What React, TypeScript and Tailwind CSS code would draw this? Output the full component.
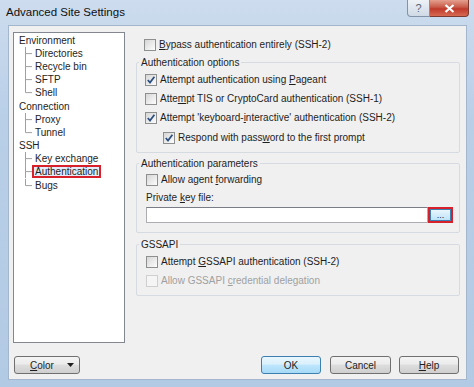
import React from 'react';

type TreeItem = { label: string; child?: boolean; last?: boolean; selected?: boolean };

const tree: TreeItem[] = [
  { label: 'Environment' },
  { label: 'Directories', child: true },
  { label: 'Recycle bin', child: true },
  { label: 'SFTP', child: true },
  { label: 'Shell', child: true, last: true },
  { label: 'Connection' },
  { label: 'Proxy', child: true },
  { label: 'Tunnel', child: true, last: true },
  { label: 'SSH' },
  { label: 'Key exchange', child: true },
  { label: 'Authentication', child: true, selected: true },
  { label: 'Bugs', child: true, last: true },
];

const Check: React.FC<{ checked?: boolean; disabled?: boolean }> = ({ checked, disabled }) => (
  <span
    className={
      disabled
        ? 'w-[12px] h-[12px] shrink-0 border border-[#cfcfcf] bg-[#f5f5f5]'
        : 'w-[12px] h-[12px] shrink-0 border border-[#8e8f8f] bg-[linear-gradient(135deg,#d6d6d6,#fdfdfd)] flex items-center justify-center'
    }
  >
    {checked && (
      <svg width="10" height="10" viewBox="0 0 10 10">
        <path d="M1.8 5 L4 7.6 L8.4 1.8" stroke="#2a4d80" strokeWidth="1.7" fill="none" />
      </svg>
    )}
  </span>
);

const CheckRow: React.FC<{ checked?: boolean; disabled?: boolean; className?: string; children: React.ReactNode }> = ({
  checked,
  disabled,
  className,
  children,
}) => (
  <div className={`flex items-center h-[13px] gap-[3px] ${className ?? ''}`}>
    <Check checked={checked} disabled={disabled} />
    <span className={disabled ? 'text-[#a0a0a0] whitespace-nowrap' : 'whitespace-nowrap'}>{children}</span>
  </div>
);

const Group: React.FC<{ title: string; className?: string; children: React.ReactNode }> = ({ title, className, children }) => (
  <fieldset className={`border border-[#d5dbe0] rounded-[2px] pl-[2px] pr-[6px] ${className ?? ''}`}>
    <legend className="px-[2px] h-[13px] leading-[13px]">{title}</legend>
    {children}
  </fieldset>
);

const grayBtn =
  'h-[18px] rounded-[3px] border border-[#707070] bg-[linear-gradient(180deg,#f4f4f4_0%,#ebebeb_45%,#dddddd_50%,#cfcfcf_100%)] flex items-center';

const App: React.FC = () => {
  return (
    <div className="w-[474px] h-[387px] flex flex-col font-['Liberation_Sans',Arial,sans-serif] text-[10px] text-[#1e1e1e] bg-[linear-gradient(180deg,#cddcee_0%,#b9cfe8_30%,#b3cae4_100%)]">
      {/* title bar */}
      <div className="h-[25px] flex items-start shrink-0">
        <div className="pl-[6px] pt-[5px] text-[11.5px] leading-[14px] text-[#101010]">Advanced Site Settings</div>
        <div className="ml-auto mr-[5px] flex">
          <div className="w-[23px] h-[17px] rounded-bl-[4px] border border-[#8392a6] border-t-0 bg-[linear-gradient(180deg,#eef2f7,#cfd9e5)] flex items-center justify-center text-[11px] text-[#5a6576]">
            ?
          </div>
          <div className="w-[39px] h-[17px] rounded-br-[4px] border border-[#7a3a30] border-t-0 border-l-0 bg-[linear-gradient(180deg,#e5a08f_0%,#c85a48_45%,#c0392a_55%,#d66a52_100%)] flex items-center justify-center">
            <svg width="11" height="9" viewBox="0 0 11 9">
              <path d="M1.5 1 L9.5 8 M9.5 1 L1.5 8" stroke="#ffffff" strokeWidth="2.2" />
            </svg>
          </div>
        </div>
      </div>

      {/* client area */}
      <div className="ml-[8px] mr-[7px] mb-[7px] flex-1 bg-[#f0f0f0] border border-[#a3b6cc] flex flex-col px-[4px] pt-[6px] pb-[5px]">
        <div className="flex h-[311px]">
          {/* tree */}
          <div className="w-[112px] h-full bg-white border border-[#828790] pt-[0.5px]">
            {tree.map((it) => (
              <div key={it.label} className="h-[13.2px] leading-[13px] flex items-center">
                {it.child ? (
                  <>
                    <svg width="7" height="13.2" viewBox="0 0 7 13.2" className="ml-[11px] shrink-0">
                      <path d={it.last ? 'M0.5 0 V6.6 H7' : 'M0.5 0 V13.2 M0.5 6.6 H7'} stroke="#a0a0a0" strokeWidth="1" fill="none" />
                    </svg>
                    <span
                      className={
                        it.selected
                          ? 'border-2 border-[#d8202a] bg-[#e3ecf8] h-[13px] leading-[9px] px-[1px] whitespace-nowrap'
                          : 'border-2 border-transparent px-[1px] whitespace-nowrap'
                      }
                    >
                      {it.label}
                    </span>
                  </>
                ) : (
                  <span className="pl-[5px]">{it.label}</span>
                )}
              </div>
            ))}
          </div>

          {/* settings */}
          <div className="flex-1 ml-[11px] mr-[2px] flex flex-col">
            <CheckRow className="mt-[6px] ml-[8px]">
              <u>B</u>ypass authentication entirely (SSH-2)
            </CheckRow>

            <Group title="Authentication options" className="mt-[5px] pb-[8px]">
              <div className="flex flex-col gap-[6px] pt-[4px] pl-[6px]">
                <CheckRow checked>
                  Attempt authentication using <u>P</u>ageant
                </CheckRow>
                <CheckRow>
                  Atte<u>m</u>pt TIS or CryptoCard authentication (SSH-1)
                </CheckRow>
                <CheckRow checked>
                  Attempt 'keyboard-<u>i</u>nteractive' authentication (SSH-2)
                </CheckRow>
                <CheckRow checked className="ml-[18px] mt-[1px]">
                  Respond with pass<u>w</u>ord to the first prompt
                </CheckRow>
              </div>
            </Group>

            <Group title="Authentication parameters" className="mt-[4px] pb-[9px]">
              <div className="flex flex-col pt-[3px] pl-[7px]">
                <CheckRow>
                  Allow agent <u>f</u>orwarding
                </CheckRow>
                <div className="mt-[5px] h-[13px] leading-[13px]">
                  Private <u>k</u>ey file:
                </div>
                <div className="mt-[3px] flex h-[16px]">
                  <div className="flex-1 bg-white border border-[#abadb3] border-t-[#7a7d85]" />
                  <div className="w-[25px] h-[16px] border-2 border-[#d8202a] flex">
                    <div className="flex-1 border border-[#3c7fb1] bg-[linear-gradient(180deg,#eaf6fd,#bde3fa)] flex items-end justify-center text-[9px] leading-[10px] text-[#1a2a4a]">
                      ...
                    </div>
                  </div>
                </div>
              </div>
            </Group>

            <Group title="GSSAPI" className="mt-[5px] pb-[8px]">
              <div className="flex flex-col gap-[6px] pt-[4px] pl-[7px]">
                <CheckRow>
                  Attempt <u>G</u>SSAPI authentication (SSH-2)
                </CheckRow>
                <CheckRow disabled>
                  Allow GSSAPI <u>c</u>redential delegation
                </CheckRow>
              </div>
            </Group>
          </div>
        </div>

        {/* buttons */}
        <div className="mt-[13px] flex items-center">
          <button className={`${grayBtn} ml-[1px] w-[66px] pl-[15px] pr-[5px]`}>
            <span>
              <u>C</u>olor
            </span>
            <svg width="7" height="4" viewBox="0 0 7 4" className="ml-auto">
              <path d="M0 0 H7 L3.5 4 Z" fill="#1e1e1e" />
            </svg>
          </button>
          <div className="flex-1" />
          <button className="h-[18px] w-[60px] rounded-[3px] border border-[#3c7fb1] bg-[linear-gradient(180deg,#eaf6fd_0%,#d9f0fc_45%,#bee6fd_50%,#a7d9f5_100%)] flex items-center justify-center">
            OK
          </button>
          <button className={`${grayBtn} ml-[9px] w-[61px] justify-center`}>Cancel</button>
          <button className={`${grayBtn} ml-[8px] mr-[3px] w-[60px] justify-center`}>
            <u>H</u>elp
          </button>
        </div>
      </div>
    </div>
  );
};

export default App;
